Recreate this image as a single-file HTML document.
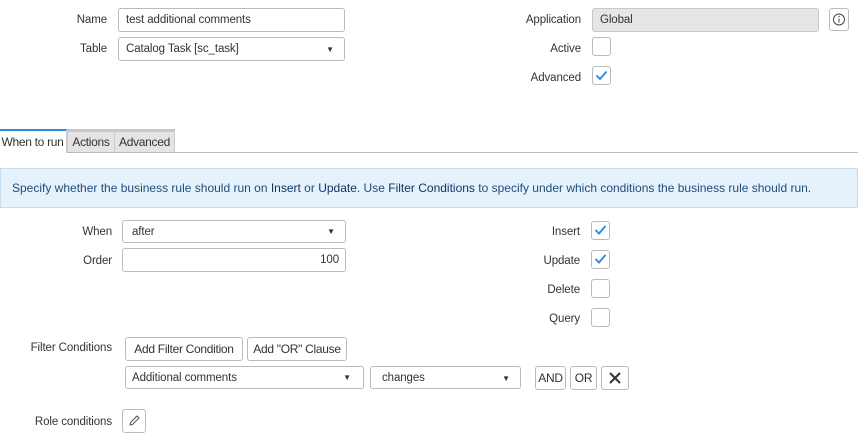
<!DOCTYPE html>
<html><head><style>
*{box-sizing:border-box;margin:0;padding:0}
body{width:858px;height:448px;background:#fff;font-family:"Liberation Sans",sans-serif;font-size:11.5px;letter-spacing:-0.1px;color:#333;position:relative;overflow:hidden}
.a{position:absolute}
.lbl{position:absolute;text-align:right;white-space:nowrap;font-size:11.5px;color:#333}
.in{position:absolute;border:1px solid #bbb;border-radius:3px;background:#fff;padding-left:7px;line-height:23px;font-size:11.5px;white-space:nowrap}
.arr{position:absolute;right:10px;top:0;font-size:8px}
.cb{position:absolute;width:19px;height:19px;border:1px solid #bbb;border-radius:3px;background:#fff}
.btn{position:absolute;border:1px solid #bbb;border-radius:3px;background:#fff;text-align:center;line-height:22px;font-size:12px;color:#333;white-space:nowrap;letter-spacing:-0.3px}
.tab{position:absolute;top:129px;height:23px;line-height:23px;font-size:12px;letter-spacing:-0.3px;text-align:center;border:1px solid #ccc;border-bottom:none;white-space:nowrap;overflow:hidden}
</style></head><body>
<div class="lbl" style="right:751px;top:14px">Name</div>
<div class="in" style="left:118px;top:8px;width:227px;height:24px">test additional comments</div>
<div class="lbl" style="right:751px;top:43px">Table</div>
<div class="in" style="left:118px;top:37px;width:227px;height:24px">Catalog Task [sc_task]<span class="arr">▼</span></div>

<div class="lbl" style="right:277px;top:14px">Application</div>
<div class="in" style="left:592px;top:8px;width:227px;height:24px;background:#e6e6e6;border-color:#c8c8c8">Global</div>
<div class="a" style="left:829px;top:8px;width:20px;height:23px;border:1px solid #bbb;border-radius:3px"><svg width="18" height="21" style="position:absolute;left:0;top:0"><circle cx="9" cy="10.5" r="5.5" fill="none" stroke="#444" stroke-width="1"/><line x1="9" y1="9.5" x2="9" y2="13.5" stroke="#444"/><circle cx="9" cy="7.5" r=".7" fill="#444"/></svg></div>
<div class="lbl" style="right:277px;top:43px">Active</div>
<div class="cb" style="left:592px;top:37px"></div>
<div class="lbl" style="right:277px;top:72px">Advanced</div>
<div class="cb" style="left:592px;top:66px"><svg width="17" height="17"><path d="M3.5 8.5 L7 12 L13.5 4.5" fill="none" stroke="#2d86e0" stroke-width="1.8"/></svg></div>

<div class="a" style="left:0;top:152px;width:858px;height:1px;background:#bbb"></div>
<div class="tab" style="left:-2px;width:69px;background:#fff;border-top:2px solid #2d86e0;height:24px">When to run</div>
<div class="tab" style="left:67px;width:48px;background:#e4e4e4;border-top:3px solid #c8c8c8;line-height:21px">Actions</div>
<div class="tab" style="left:114px;width:61px;background:#e4e4e4;border-top:3px solid #c8c8c8;line-height:21px">Advanced</div>

<div class="a" style="left:0;top:168px;width:858px;height:40px;background:#e5f1fb;border:1px solid #c5dcef;color:#1f4e79;font-size:12px;letter-spacing:0;line-height:38px;padding-left:11px;white-space:nowrap">Specify whether the business rule should run on <span style="color:#0d3761">Insert</span> or <span style="color:#0d3761">Update</span>. Use <span style="color:#0d3761">Filter Conditions</span> to specify under which conditions the business rule should run.</div>

<div class="lbl" style="right:746px;top:226px">When</div>
<div class="in" style="left:122px;top:220px;width:224px;height:23px;padding-left:9px;line-height:22px">after<span class="arr">▼</span></div>
<div class="lbl" style="right:746px;top:255px">Order</div>
<div class="in" style="left:122px;top:248px;width:224px;height:24px;text-align:right;padding-right:6px">100</div>

<div class="lbl" style="right:278px;top:226px">Insert</div>
<div class="cb" style="left:591px;top:221px"><svg width="17" height="17"><path d="M3.5 8 L7 11.5 L13.5 4" fill="none" stroke="#2d86e0" stroke-width="1.8"/></svg></div>
<div class="lbl" style="right:278px;top:255px">Update</div>
<div class="cb" style="left:591px;top:250px"><svg width="17" height="17"><path d="M3.5 8 L7 11.5 L13.5 4" fill="none" stroke="#2d86e0" stroke-width="1.8"/></svg></div>
<div class="lbl" style="right:278px;top:284px">Delete</div>
<div class="cb" style="left:591px;top:279px"></div>
<div class="lbl" style="right:278px;top:313px">Query</div>
<div class="cb" style="left:591px;top:308px"></div>

<div class="lbl" style="right:746px;top:342px">Filter Conditions</div>
<div class="btn" style="left:125px;top:337px;width:118px;height:24px">Add Filter Condition</div>
<div class="btn" style="left:247px;top:337px;width:100px;height:24px">Add "OR" Clause</div>
<div class="in" style="left:125px;top:366px;width:239px;height:23px;padding-left:6px;line-height:22px">Additional comments<span class="arr" style="right:12px">▼</span></div>
<div class="in" style="left:370px;top:366px;width:151px;height:23px;padding-left:11px">changes<span class="arr">▼</span></div>
<div class="btn" style="left:535px;top:366px;width:31px;height:24px">AND</div>
<div class="btn" style="left:570px;top:366px;width:27px;height:24px">OR</div>
<div class="btn" style="left:601px;top:366px;width:28px;height:24px"><svg width="26" height="22" style="position:absolute;left:0;top:0"><path d="M8 6 L18 16 M18 6 L8 16" stroke="#333" stroke-width="2"/></svg></div>

<div class="lbl" style="right:746px;top:416px">Role conditions</div>
<div class="btn" style="left:122px;top:409px;width:24px;height:24px"><svg width="22" height="22" style="position:absolute;left:0;top:0"><path d="M7 15 L7.5 12.5 L14 6 L16 8 L9.5 14.5 Z" fill="none" stroke="#555" stroke-width="1"/></svg></div>
</body></html>
